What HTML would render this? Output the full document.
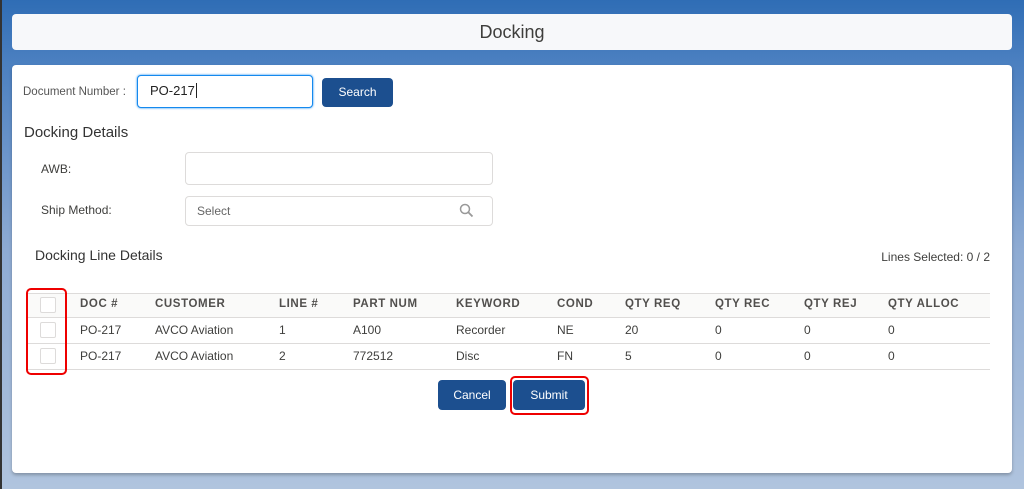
<!DOCTYPE html>
<html><head><style>
*{box-sizing:border-box;margin:0;padding:0}
body{width:1024px;height:489px;overflow:hidden;font-family:"Liberation Sans",sans-serif;color:#3e3e3c;background:linear-gradient(#2f6db5 0px,#4a7fc0 60px,#8eabd3 250px,#b0c4de 489px);position:relative}
.abs{position:absolute}
.hdr{left:12px;top:14px;width:1000px;height:36px;background:#f7f8fa;border-radius:4px;text-align:center;font-size:18px;line-height:36px;color:#3e3e3c}
.card{left:12px;top:65px;width:1000px;height:408px;background:#fff;border-radius:4px;box-shadow:0 2px 3px rgba(0,0,0,.25)}
.btn{background:#1c4f8f;color:#fff;font-size:12px;text-align:center;border-radius:4px}
.inp{border:1px solid #dddbda;border-radius:4px;background:#fff}
.t{font-size:12px;color:#3e3e3c}
.th{font-size:11.5px;font-weight:600;letter-spacing:.6px;color:#514f4d}
.cb{width:16px;height:16px;border:1px solid #dddbda;border-radius:2px;background:#fff}
.line{height:1px;background:#dddbda}
.red{border:2px solid #e00;border-radius:5px}
</style></head><body>
<div class="abs" style="left:0;top:0;width:2px;height:489px;background:#333"></div>
<div class="abs hdr">Docking</div>
<div class="abs card"></div>
<div class="abs t" style="left:23px;top:86px;font-size:11.5px;color:#555">Document Number :</div>
<div class="abs inp" style="left:137px;top:75px;width:176px;height:33px;border:1px solid #1589ee;box-shadow:0 0 2px #1589ee"></div>
<div class="abs" style="left:150px;top:83px;font-size:13px;color:#222">PO-217<span style="border-left:1px solid #222;margin-left:1px"></span></div>
<div class="abs btn" style="left:322px;top:78px;width:71px;height:29px;line-height:29px">Search</div>
<div class="abs" style="left:24px;top:124px;font-size:15px;color:#333">Docking Details</div>
<div class="abs t" style="left:41px;top:162px">AWB:</div>
<div class="abs inp" style="left:185px;top:152px;width:308px;height:33px"></div>
<div class="abs t" style="left:41px;top:203px">Ship Method:</div>
<div class="abs inp" style="left:185px;top:196px;width:308px;height:30px"></div>
<div class="abs t" style="left:197px;top:204px;color:#666">Select</div>
<svg class="abs" style="left:459px;top:203px" width="15" height="15" viewBox="0 0 15 15"><circle cx="6" cy="6" r="4.5" fill="none" stroke="#999" stroke-width="1.5"/><path d="M9.3 9.3L13.5 13.5" stroke="#999" stroke-width="1.8"/></svg>
<div class="abs" style="left:35px;top:247px;font-size:14px;color:#333">Docking Line Details</div>
<div class="abs t" style="right:34px;top:250px;text-align:right">Lines Selected: 0 / 2</div>
<div class="abs" style="left:28px;top:293px;width:962px;height:24px;background:#fafaf9;border-top:1px solid #dddbda"></div>
<div class="abs line" style="left:28px;top:317px;width:962px"></div>
<div class="abs line" style="left:28px;top:343px;width:962px"></div>
<div class="abs line" style="left:28px;top:369px;width:962px"></div>
<div class="abs cb" style="left:40px;top:297px"></div>
<div class="abs cb" style="left:40px;top:322px"></div>
<div class="abs cb" style="left:40px;top:348px"></div>
<div class="abs th" style="left:80px;top:298px">DOC #</div>
<div class="abs th" style="left:155px;top:298px">CUSTOMER</div>
<div class="abs th" style="left:279px;top:298px">LINE #</div>
<div class="abs th" style="left:353px;top:298px">PART NUM</div>
<div class="abs th" style="left:456px;top:298px">KEYWORD</div>
<div class="abs th" style="left:557px;top:298px">COND</div>
<div class="abs th" style="left:625px;top:298px">QTY REQ</div>
<div class="abs th" style="left:715px;top:298px">QTY REC</div>
<div class="abs th" style="left:804px;top:298px">QTY REJ</div>
<div class="abs th" style="left:888px;top:298px">QTY ALLOC</div>
<div class="abs t" style="left:80px;top:323px">PO-217</div><div class="abs t" style="left:155px;top:323px">AVCO Aviation</div><div class="abs t" style="left:279px;top:323px">1</div><div class="abs t" style="left:353px;top:323px">A100</div><div class="abs t" style="left:456px;top:323px">Recorder</div><div class="abs t" style="left:557px;top:323px">NE</div><div class="abs t" style="left:625px;top:323px">20</div><div class="abs t" style="left:715px;top:323px">0</div><div class="abs t" style="left:804px;top:323px">0</div><div class="abs t" style="left:888px;top:323px">0</div>
<div class="abs t" style="left:80px;top:349px">PO-217</div><div class="abs t" style="left:155px;top:349px">AVCO Aviation</div><div class="abs t" style="left:279px;top:349px">2</div><div class="abs t" style="left:353px;top:349px">772512</div><div class="abs t" style="left:456px;top:349px">Disc</div><div class="abs t" style="left:557px;top:349px">FN</div><div class="abs t" style="left:625px;top:349px">5</div><div class="abs t" style="left:715px;top:349px">0</div><div class="abs t" style="left:804px;top:349px">0</div><div class="abs t" style="left:888px;top:349px">0</div>
<div class="abs btn" style="left:438px;top:380px;width:68px;height:30px;line-height:30px">Cancel</div>
<div class="abs btn" style="left:513px;top:380px;width:72px;height:30px;line-height:30px">Submit</div>
<div class="abs red" style="left:26px;top:288px;width:41px;height:87px"></div>
<div class="abs red" style="left:510px;top:376px;width:79px;height:39px"></div>
</body></html>
